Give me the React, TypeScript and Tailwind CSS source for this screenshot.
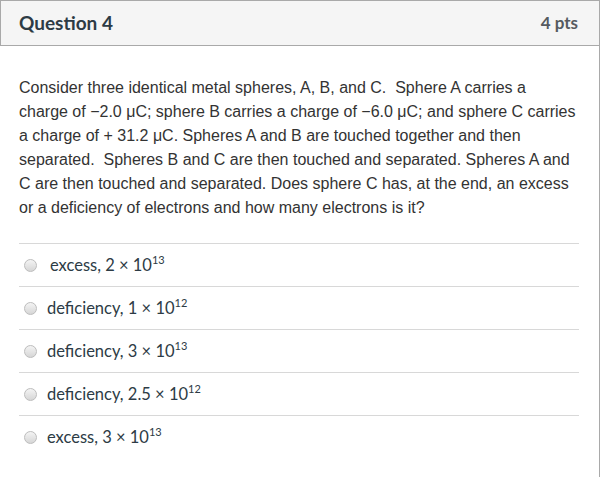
import React from 'react';

interface Answer {
    label: string;
    base: string;
    exp: string;
    indent?: boolean;
}

const answers: Answer[] = [
    { label: 'excess, 2 × ', base: '10', exp: '13', indent: true },
    { label: 'deficiency, 1 × ', base: '10', exp: '12' },
    { label: 'deficiency, 3 × ', base: '10', exp: '13' },
    { label: 'deficiency, 2.5 × ', base: '10', exp: '12' },
    { label: 'excess, 3 × ', base: '10', exp: '13' },
];

function Radio() {
    return (
        <span className="inline-block w-[13px] h-[13px] rounded-full border border-[#bdbdbd] bg-gradient-to-b from-[#f4f4f4] to-[#d6d6d6] shrink-0" />
    );
}

export default function App() {
    return (
        <div className="w-[601px] h-[477px] bg-white overflow-hidden font-['Liberation_Sans',Arial,sans-serif]">
            <div className="w-[600px] h-full border-r border-[#a9a9a9]">
                {/* Header */}
                <div className="h-[46px] flex items-center justify-between pl-[18px] pr-[21px] bg-[#f5f5f5] border-l border-t border-b border-[#a9a9a9] font-['Lato',sans-serif]">
                    <span className="text-[19px] font-bold text-[#2d3b45]">Question 4</span>
                    <span className="text-[17px] font-bold text-[#555a60]">4 pts</span>
                </div>

                {/* Body */}
                <div className="pt-[30px] pl-[19px] pr-[20px]">
                    <p className="text-[16px] leading-[24px] text-[#333]">
                        Consider three identical metal spheres, A, B, and C.&nbsp; Sphere A carries a charge of −2.0 μC; sphere B carries a charge of −6.0 μC; and sphere C carries a charge of + 31.2 μC. Spheres A and B are touched together and then separated.&nbsp; Spheres B and C are then touched and separated. Spheres A and C are then touched and separated. Does sphere C has, at the end, an excess or a deficiency of electrons and how many electrons is it?
                    </p>

                    <div className="mt-[23px] font-['Lato',sans-serif]">
                        {answers.map((a, i) => (
                            <div key={i} className="h-[43px] border-t border-[#d8d8d8] flex items-center pl-[5px] gap-[10px]">
                                <Radio />
                                <span className={`text-[16.5px] text-[#2d3b45] ${a.indent ? 'pl-[3px]' : ''}`}>
                                    {a.label}
                                    {a.base}
                                    <sup className="text-[11px] top-[-0.6em]">{a.exp}</sup>
                                </span>
                            </div>
                        ))}
                    </div>
                </div>
            </div>
        </div>
    );
}
